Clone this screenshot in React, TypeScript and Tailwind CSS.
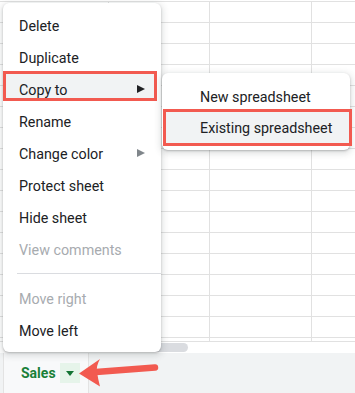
import React from 'react';

type Item = { label: string; disabled?: boolean; arrow?: 'dark' | 'gray'; boxed?: boolean };

const top: Item[] = [
  { label: 'Delete' },
  { label: 'Duplicate' },
  { label: 'Copy to', arrow: 'dark', boxed: true },
  { label: 'Rename' },
  { label: 'Change color', arrow: 'gray' },
  { label: 'Protect sheet' },
  { label: 'Hide sheet' },
  { label: 'View comments', disabled: true },
];

const bottom: Item[] = [{ label: 'Move right', disabled: true }, { label: 'Move left' }];

const MenuRow = ({ item }: { item: Item }) => (
  <div className="relative h-8 flex items-center justify-between pl-4 pr-4">
    {item.boxed && (
      <div className="absolute left-0 top-[-2px] w-[154px] h-[30px] border-[3px] border-[#f25a50] bg-[#f1f3f4]" />
    )}
    <span className={`relative top-[2px] ${item.disabled ? 'text-[#a7abaf]' : 'text-[#202124]'}`}>{item.label}</span>
    {item.arrow && (
      <svg width="8" height="8" viewBox="0 0 8 8" className="relative">
        <path d="M0 0 L8 4 L0 8 Z" fill={item.arrow === 'dark' ? '#202124' : '#80868b'} />
      </svg>
    )}
  </div>
);

const Grid = () => (
  <div className="h-[341px] overflow-hidden pt-px">
    {Array.from({ length: 17 }).map((_, r) => (
      <div key={r} className="flex h-[21px] border-t border-[#e1e1e1]">
        <div className="w-[108px]" />
        <div className="w-[101px] border-l border-[#e1e1e1]" />
        <div className="w-[102px] border-l border-[#e1e1e1]" />
        <div className="flex-1 border-l border-[#e1e1e1]" />
      </div>
    ))}
  </div>
);

export default function App() {
  return (
    <div className="relative w-[355px] h-[393px] overflow-hidden bg-white flex flex-col font-['Roboto',sans-serif] text-[14.3px]">
      <Grid />
      <div className="h-[12px] border-t border-[#e1e1e1] bg-white">
        <div className="ml-[10px] mt-px w-[178px] h-[9px] rounded-full bg-[#dadce0]" />
      </div>
      <div className="flex-1 flex bg-[#f1f3f4]">
        <div className="ml-[3px] w-[86px] flex items-center pl-[17px] gap-[4px] bg-[#f8f9fa] border-l border-r border-[#e3e3e3]">
          <span className="text-[14px] font-bold text-[#188038]">Sales</span>
          <div className="w-5 h-5 flex items-center justify-center bg-[#e6f4ea]">
            <svg width="8" height="5" viewBox="0 0 8 5">
              <path d="M0 0 L8 0 L4 5 Z" fill="#137333" />
            </svg>
          </div>
        </div>
      </div>

      {/* sheet tab context menu */}
      <div className="absolute left-[3px] top-[3px] w-[158px] py-[6px] bg-white rounded-md shadow-[0_2px_6px_2px_rgba(60,64,67,0.15),0_1px_2px_rgba(60,64,67,0.3)]">
        {top.map((it) => (
          <MenuRow key={it.label} item={it} />
        ))}
        <div className="ml-[14px] my-2 h-px bg-[#dadce0]" />
        {bottom.map((it) => (
          <MenuRow key={it.label} item={it} />
        ))}
      </div>

      {/* copy to submenu */}
      <div className="absolute left-[162px] top-[73px] w-[188px] pt-[7px] pb-[6px] bg-white rounded-md shadow-[0_2px_6px_2px_rgba(60,64,67,0.15),0_1px_2px_rgba(60,64,67,0.3)]">
        <div className="h-8 flex items-center pl-[38px] text-[#202124]">
          <span className="relative top-[2px]">New spreadsheet</span>
        </div>
        <div className="relative h-8 flex items-center pl-[38px] text-[#202124]">
          <div className="absolute left-px top-[-3px] w-[189px] h-[37px] border-[3px] border-[#f25a50] bg-[#f1f3f4]" />
          <span className="relative top-[1px]">Existing spreadsheet</span>
        </div>
      </div>

      {/* callout arrow */}
      <svg className="absolute left-[76px] top-[355px]" width="84" height="34" viewBox="76 355 84 34">
        <line x1="96" y1="372" x2="155" y2="367.5" stroke="#f25a50" strokeWidth="6.5" strokeLinecap="round" />
        <path d="M79 373.5 L100 359 Q96 366 97 372 Q98 379 100 386.5 Z" fill="#f25a50" />
      </svg>
    </div>
  );
}
